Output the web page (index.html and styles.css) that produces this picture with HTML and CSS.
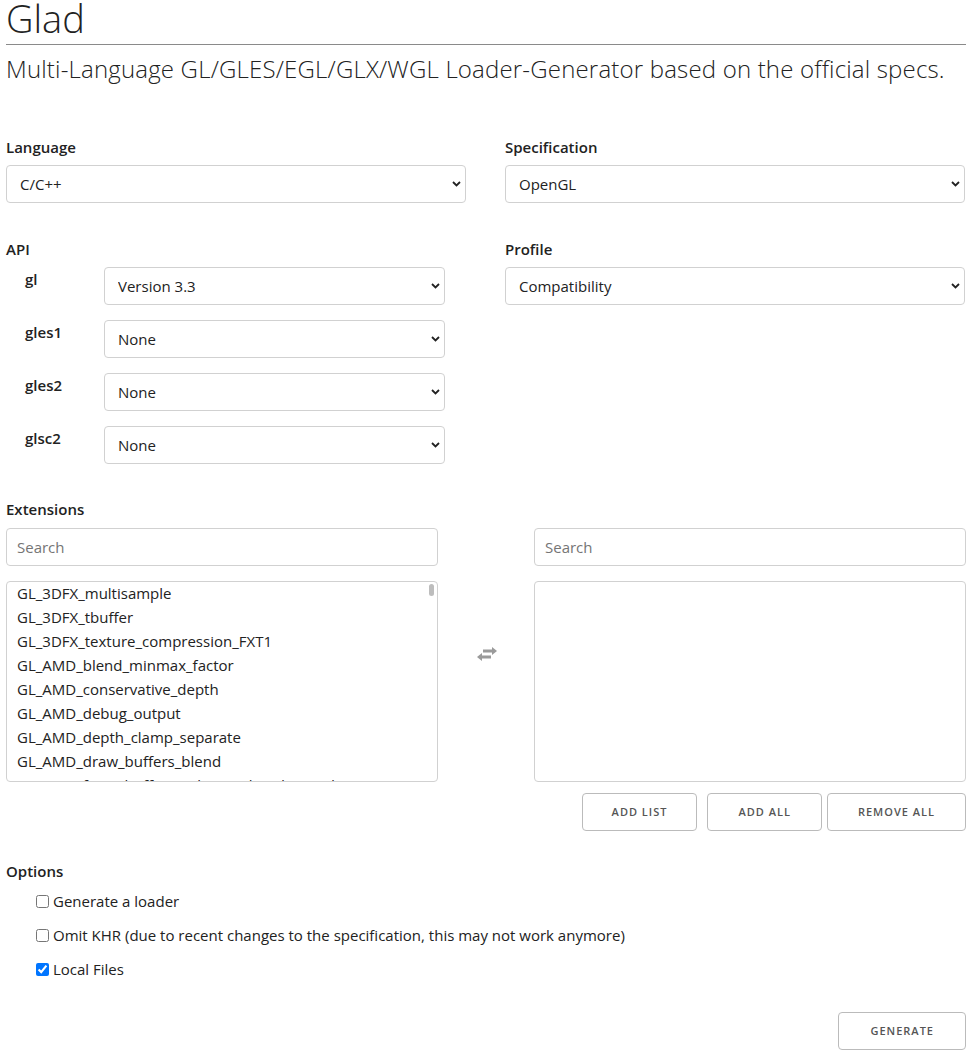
FILE: index.html
```html
<!DOCTYPE html>
<html lang="en">
<head>
<meta charset="utf-8">
<title>Glad</title>
<link rel="stylesheet" href="styles.css">
</head>
<body>
<div class="container">
  <h1 class="title">Glad</h1>
  <p class="subtitle">Multi-Language GL/GLES/EGL/GLX/WGL Loader-Generator based on the official specs.</p>

  <div class="row two">
    <div class="col">
      <label class="lbl">Language</label>
      <select class="sel"><option>C/C++</option></select>
    </div>
    <div class="col">
      <label class="lbl">Specification</label>
      <select class="sel"><option>OpenGL</option></select>
    </div>
  </div>

  <div class="row two api-row">
    <div class="col">
      <label class="lbl">API</label>
      <div class="api-line"><span class="api-name">gl</span><select class="sel"><option>Version 3.3</option></select></div>
      <div class="api-line"><span class="api-name">gles1</span><select class="sel"><option>None</option></select></div>
      <div class="api-line"><span class="api-name">gles2</span><select class="sel"><option>None</option></select></div>
      <div class="api-line"><span class="api-name">glsc2</span><select class="sel"><option>None</option></select></div>
    </div>
    <div class="col">
      <label class="lbl">Profile</label>
      <select class="sel"><option>Compatibility</option></select>
    </div>
  </div>

  <label class="lbl ext-lbl">Extensions</label>
  <div class="ext-grid">
    <input class="search" type="text" placeholder="Search">
    <div></div>
    <input class="search" type="text" placeholder="Search">
    <div class="listbox">
      <div class="items">
        <div class="item">GL_3DFX_multisample</div>
        <div class="item">GL_3DFX_tbuffer</div>
        <div class="item">GL_3DFX_texture_compression_FXT1</div>
        <div class="item">GL_AMD_blend_minmax_factor</div>
        <div class="item">GL_AMD_conservative_depth</div>
        <div class="item">GL_AMD_debug_output</div>
        <div class="item">GL_AMD_depth_clamp_separate</div>
        <div class="item">GL_AMD_draw_buffers_blend</div>
        <div class="item">GL_AMD_framebuffer_multisample_advanced</div>
      </div>
      <span class="thumb"></span>
    </div>
    <div class="swap">
      <svg width="22" height="16" viewBox="0 0 22 16" aria-hidden="true">
        <path d="M7 2.5h9V0l5 4-5 4V5.5H7z" fill="#9a9a9a"/>
        <path d="M15 8.5H6V6L1 10l5 4v-2.5h9z" fill="#9a9a9a"/>
      </svg>
    </div>
    <div class="listbox"></div>
  </div>
  <div class="btn-row">
    <button class="btn btn-first">Add List</button>
    <button class="btn btn-mid">Add All</button>
    <button class="btn btn-last">Remove All</button>
  </div>

  <label class="lbl opt-lbl">Options</label>
  <div class="opts">
    <label class="opt"><input type="checkbox">Generate a loader</label>
    <label class="opt"><input type="checkbox">Omit KHR (due to recent changes to the specification, this may not work anymore)</label>
    <label class="opt"><input type="checkbox" checked>Local Files</label>
  </div>

  <div class="gen-row">
    <button class="btn btn-gen">Generate</button>
  </div>
</div>
</body>
</html>
```

FILE: styles.css
```css
html, body {
  margin: 0;
  padding: 0;
  background: #fff;
}
body {
  font-family: "Open Sans", "Lato", sans-serif;
  color: #222;
  font-size: 15px;
}
.container {
  width: 960px;
  padding-left: 6px;
  padding-bottom: 14px;
}
.title {
  margin: -4px 0 0;
  font-size: 38px;
  font-weight: 300;
  line-height: 44px;
  padding-bottom: 4px;
  border-bottom: 1px solid #8a8a8a;
}
.subtitle {
  margin: 9px 0 0;
  font-size: 24px;
  font-weight: 300;
  line-height: 30px;
  letter-spacing: 0.18px;
  white-space: nowrap;
}
.row.two {
  display: grid;
  grid-template-columns: 460px 460px;
  column-gap: 39px;
}
.row.two:first-of-type { margin-top: 53px; }
.api-row { margin-top: 36px; }
.lbl {
  display: block;
  font-weight: 600;
  font-size: 15px;
  line-height: 20px;
  margin-bottom: 8px;
}
.sel {
  display: block;
  width: 100%;
  height: 38px;
  margin: 0;
  padding: 0 24px 0 13px;
  border: 1px solid #d1d1d1;
  border-radius: 4px;
  background: #fff url("data:image/svg+xml;utf8,<svg xmlns='http://www.w3.org/2000/svg' width='9' height='6' viewBox='0 0 9 6'><path d='M1 1l3.5 3.5L8 1' fill='none' stroke='%23222' stroke-width='1.8'/></svg>") no-repeat right 4px center;
  -webkit-appearance: none;
  appearance: none;
  font-family: inherit;
  font-size: 15px;
  color: #222;
}
.api-line {
  display: grid;
  grid-template-columns: 98px 341px;
  margin-bottom: 15px;
}
.api-line:last-child { margin-bottom: 0; }
.api-name {
  padding-left: 19px;
  font-weight: 600;
  line-height: 20px;
  margin-top: 2px;
}
.ext-lbl { margin-top: 35px; margin-bottom: 9px; }
.ext-grid {
  display: grid;
  grid-template-columns: 432px 96px 432px;
  grid-template-rows: 38px 201px;
  row-gap: 15px;
}
.search {
  box-sizing: border-box;
  height: 38px;
  width: 100%;
  margin: 0;
  padding: 6px 10px;
  border: 1px solid #d1d1d1;
  border-radius: 4px;
  font-family: inherit;
  font-size: 15px;
  color: #222;
}
.search::placeholder { color: #757575; }
.listbox {
  position: relative;
  box-sizing: border-box;
  border: 1px solid #d1d1d1;
  border-radius: 4px;
  overflow: hidden;
}
.items { margin-top: -1px; }
.thumb {
  position: absolute;
  top: 2px;
  right: 3px;
  width: 5px;
  height: 12px;
  border-radius: 3px;
  background: #bdbdbd;
}
.item {
  height: 24px;
  line-height: 24px;
  padding-left: 10px;
  white-space: nowrap;
  color: #222;
}
.swap {
  display: flex;
  align-items: flex-start;
  justify-content: center;
  padding-left: 2px;
  padding-top: 66px;
}
.btn-row {
  display: flex;
  justify-content: flex-end;
  margin-top: 11px;
}
.btn {
  height: 38px;
  padding: 0 29px;
  margin: 0;
  background: transparent;
  border: 1px solid #bbb;
  border-radius: 4px;
  color: #555;
  font-family: inherit;
  font-size: 11px;
  font-weight: 600;
  letter-spacing: 1px;
  text-transform: uppercase;
  line-height: 36px;
  white-space: nowrap;
}
.btn-row .btn-first { margin-right: 10px; }
.btn-row .btn-mid { margin-right: 5px; padding: 0 30px; }
.btn-row .btn-last { padding: 0 30px; }
.gen-row .btn-gen { padding: 0 31px; }
.opt-lbl { margin-top: 30px; margin-bottom: 10px; }
.opts {
  display: flex;
  flex-direction: column;
  gap: 14px;
  padding-left: 29px;
}
.opt {
  display: flex;
  align-items: center;
  line-height: 20px;
  font-size: 15px;
}
.opt input {
  margin: 0 4px 0 1px;
  width: 13px;
  height: 13px;
}
.gen-row {
  display: flex;
  justify-content: flex-end;
  margin-top: 33px;
}
```
